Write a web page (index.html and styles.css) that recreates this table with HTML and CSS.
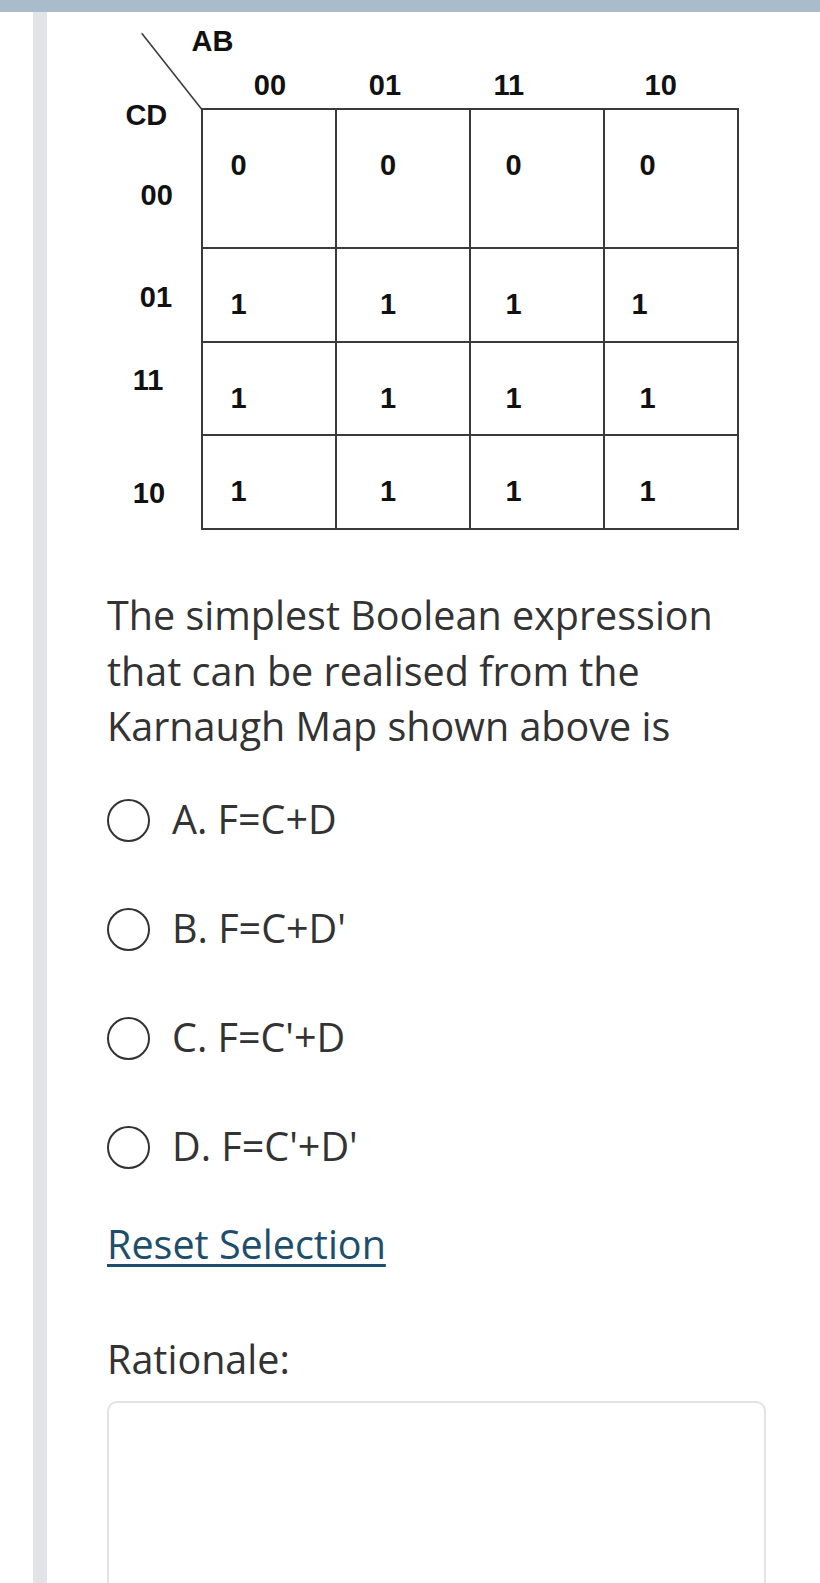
FILE: index.html
```html
<!DOCTYPE html>
<html lang="en">
<head>
<meta charset="utf-8">
<title>Karnaugh Map Question</title>
<link rel="stylesheet" href="styles.css">
</head>
<body>
<div class="topbar"></div>
<div class="page">
  <div class="rail"></div>
  <main class="content">
    <div class="kmap">
      <svg class="kmap-diag" width="110" height="110" viewBox="0 0 110 110" aria-hidden="true">
        <line x1="34.7" y1="21.3" x2="94.7" y2="97.3" stroke="#3c3c3c" stroke-width="1.6"/>
      </svg>
      <span class="klabel lab-ab">AB</span>
      <span class="klabel lab-cd">CD</span>
      <span class="klabel col-h h1">00</span>
      <span class="klabel col-h h2">01</span>
      <span class="klabel col-h h3">11</span>
      <span class="klabel col-h h4">10</span>
      <span class="klabel row-h r1">00</span>
      <span class="klabel row-h r2">01</span>
      <span class="klabel row-h r3">11</span>
      <span class="klabel row-h r4">10</span>
      <div class="kgrid">
        <div class="cell c1">0</div><div class="cell c2">0</div><div class="cell c3">0</div><div class="cell c4">0</div>
        <div class="cell c1">1</div><div class="cell c2">1</div><div class="cell c3">1</div><div class="cell c4 shifted">1</div>
        <div class="cell c1">1</div><div class="cell c2">1</div><div class="cell c3">1</div><div class="cell c4">1</div>
        <div class="cell c1">1</div><div class="cell c2">1</div><div class="cell c3">1</div><div class="cell c4">1</div>
      </div>
    </div>

    <p class="question">The simplest Boolean expression that can be realised from the Karnaugh Map shown above is</p>

    <div class="options">
      <label class="option"><span class="radio"></span><span class="opt-text">A. F=C+D</span></label>
      <label class="option"><span class="radio"></span><span class="opt-text">B. F=C+D'</span></label>
      <label class="option"><span class="radio"></span><span class="opt-text">C. F=C'+D</span></label>
      <label class="option"><span class="radio"></span><span class="opt-text">D. F=C'+D'</span></label>
    </div>

    <a class="reset" href="#">Reset Selection</a>

    <div class="rationale-label">Rationale:</div>
    <div class="rationale-box"></div>
  </main>
</div>
</body>
</html>
```

FILE: styles.css
```css
html, body {
  margin: 0;
  padding: 0;
  height: 1583px;
  overflow: hidden;
  background: #ffffff;
}

body {
  font-family: "Open Sans", "Noto Sans", sans-serif;
  color: #333333;
}

.topbar {
  height: 12px;
  background: #a8bccb;
}

.page {
  display: flex;
  height: 1571px;
}

.rail {
  flex: 0 0 14px;
  margin-left: 33px;
  background: #e1e3e6;
}

.content {
  box-sizing: border-box;
  flex: 0 0 719px;
  width: 719px;
  min-width: 0;
  padding-left: 60px;
}

/* Karnaugh map diagram */
.kmap {
  position: relative;
  box-sizing: border-box;
  width: 640px;
  padding-top: 96px;
  padding-left: 94px;
  font-family: "Liberation Sans", Arial, sans-serif;
  font-weight: bold;
  font-size: 29px;
  line-height: 29px;
  color: #111111;
}

.kmap-diag {
  position: absolute;
  left: 0;
  top: 0;
}

.klabel {
  position: absolute;
}

.lab-ab { left: 84.5px; top: 15px; }
.lab-cd { left: 18.4px; top: 89.3px; }

.col-h { top: 59.3px; }
.h1 { left: 146.8px; }
.h2 { left: 261.8px; }
.h3 { left: 386.5px; }
.h4 { left: 537.5px; }

.r1 { left: 33.5px; top: 169.3px; }
.r2 { left: 32.8px; top: 271px; }
.r3 { left: 25.8px; top: 354.3px; }
.r4 { left: 25.8px; top: 467.3px; }

.kgrid {
  display: grid;
  grid-template-columns: repeat(4, 134px);
  grid-template-rows: 139px 94px 93px 94px;
  width: 536px;
  border-top: 2px solid #3a3a3a;
  border-left: 2px solid #3a3a3a;
}

.cell {
  box-sizing: border-box;
  border-right: 2px solid #3a3a3a;
  border-bottom: 2px solid #3a3a3a;
  padding-top: 41px;
}

.c1 { padding-left: 27.5px; }
.c2 { padding-left: 43px; }
.c3 { padding-left: 34.5px; }
.c4 { padding-left: 34.5px; }
.c4.shifted { padding-left: 26.5px; }

/* Question */
.question {
  margin: 58px 0 0;
  font-size: 39.5px;
  line-height: 55.5px;
  color: #333333;
}

.options {
  display: flex;
  flex-direction: column;
  gap: 54px;
  margin-top: 37px;
}

.option {
  display: flex;
  align-items: center;
  height: 55px;
  font-size: 39.5px;
  line-height: 55px;
  color: #333333;
}

.radio {
  box-sizing: border-box;
  flex: 0 0 43px;
  width: 43px;
  height: 43px;
  margin-top: 2px;
  margin-right: 22px;
  border: 2px solid #333333;
  border-radius: 50%;
}

.reset {
  display: inline-block;
  margin-top: 43px;
  font-size: 39.5px;
  line-height: 55px;
  color: #1d4e6b;
  text-decoration: underline;
  text-decoration-thickness: 2.5px;
  text-underline-offset: 5px;
}

.rationale-label {
  margin-top: 60px;
  font-size: 39.5px;
  line-height: 55px;
  color: #333333;
}

.rationale-box {
  box-sizing: border-box;
  margin-top: 14px;
  width: 659px;
  height: 240px;
  border: 2px solid #e3e3e3;
  border-radius: 10px;
  background: #ffffff;
}
```
